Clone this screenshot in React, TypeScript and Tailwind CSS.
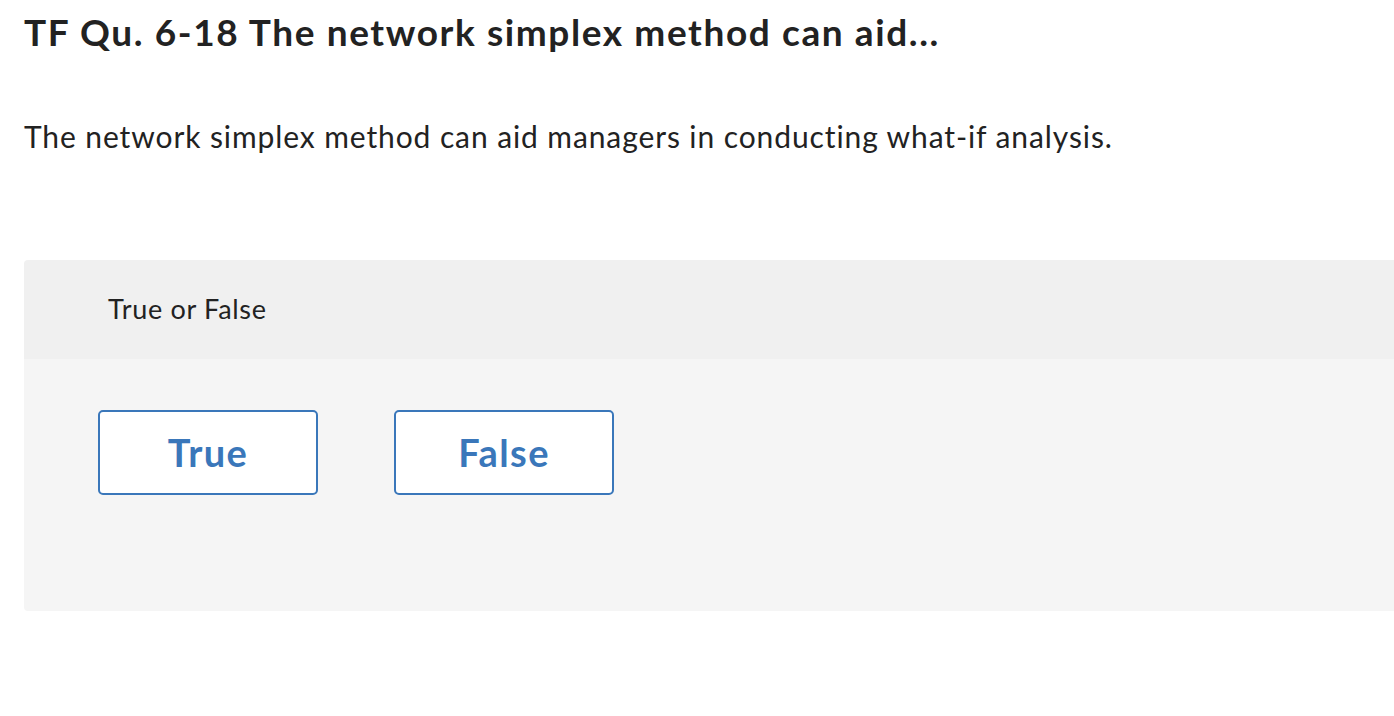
export default function App() {
  return (
    <div className="min-h-screen w-full overflow-hidden bg-white font-['Lato','Liberation_Sans',sans-serif] text-[#222]">
      <h1 className="pl-6 pt-[8px] text-[37px] font-bold leading-[48px] tracking-[1.6px]">
        TF Qu. 6-18 The network simplex method can aid...
      </h1>
      <p className="pl-6 mt-[60px] text-[30px] leading-[40px] tracking-[0.9px]">
        The network simplex method can aid managers in conducting what-if analysis.
      </p>

      <div className="ml-6 mt-[104px] overflow-hidden rounded-l-[4px]">
        <div className="flex h-[99px] items-center bg-[#f0f0f0] pl-[84px] text-[27px] tracking-[0.7px]">
          True or False
        </div>
        <div className="flex h-[252px] items-start gap-[76px] bg-[#f5f5f5] pl-[74px] pt-[51px]">
          <button className="flex h-[85px] w-[220px] items-center justify-center rounded-[5px] border-2 border-[#3a77ba] bg-white text-[38px] font-bold tracking-[1.4px] text-[#3a77ba]">
            True
          </button>
          <button className="flex h-[85px] w-[220px] items-center justify-center rounded-[5px] border-2 border-[#3a77ba] bg-white text-[38px] font-bold tracking-[1.4px] text-[#3a77ba]">
            False
          </button>
        </div>
      </div>
    </div>
  );
}
